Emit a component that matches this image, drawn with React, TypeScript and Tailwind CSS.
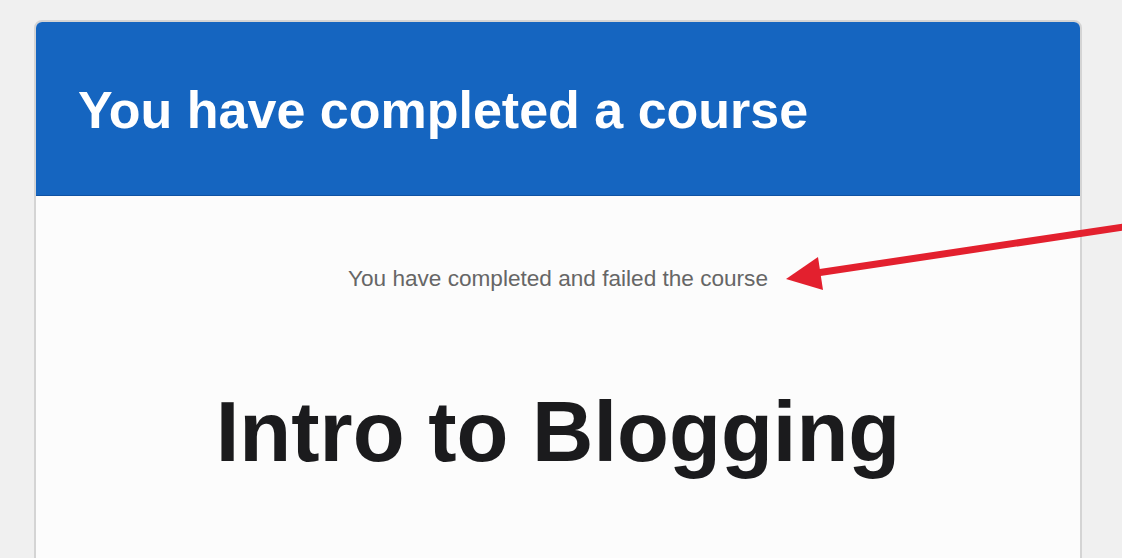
export default function App() {
  return (
    <div
      className="relative min-h-[558px] overflow-hidden bg-[#f0f0f0] pt-5 pl-[34px] pr-10"
      style={{ fontFamily: '"Liberation Sans", Arial, sans-serif' }}
    >
      <div className="w-[1048px] h-[600px] rounded-t-lg border-2 border-[#d4d4d4] bg-[#fcfcfc] overflow-hidden">
        {/* Header */}
        <div className="h-[176px] bg-[#1565c0] border-b border-[#0f52a3] flex items-center pl-[44px] pt-1 -mt-[2px] -mx-[2px]">
          <h1 className="text-white font-bold text-[52px] leading-none">You have completed a course</h1>
        </div>

        {/* Body */}
        <div className="flex flex-col items-center">
          <p className="mt-[72px] text-[#666] text-[22.6px] leading-none">You have completed and failed the course</p>
          <h2 className="mt-[98px] text-[#1b1b1d] font-bold text-[85px] leading-none">Intro to Blogging</h2>
        </div>
      </div>

      {/* Annotation arrow */}
      <svg className="absolute left-0 top-0 pointer-events-none" width="1122" height="558" viewBox="0 0 1122 558">
        <line x1="1130" y1="226" x2="810" y2="274" stroke="#e3202e" strokeWidth="7" />
        <polygon points="786,279 818,257 823,290" fill="#e3202e" />
      </svg>
    </div>
  );
}
